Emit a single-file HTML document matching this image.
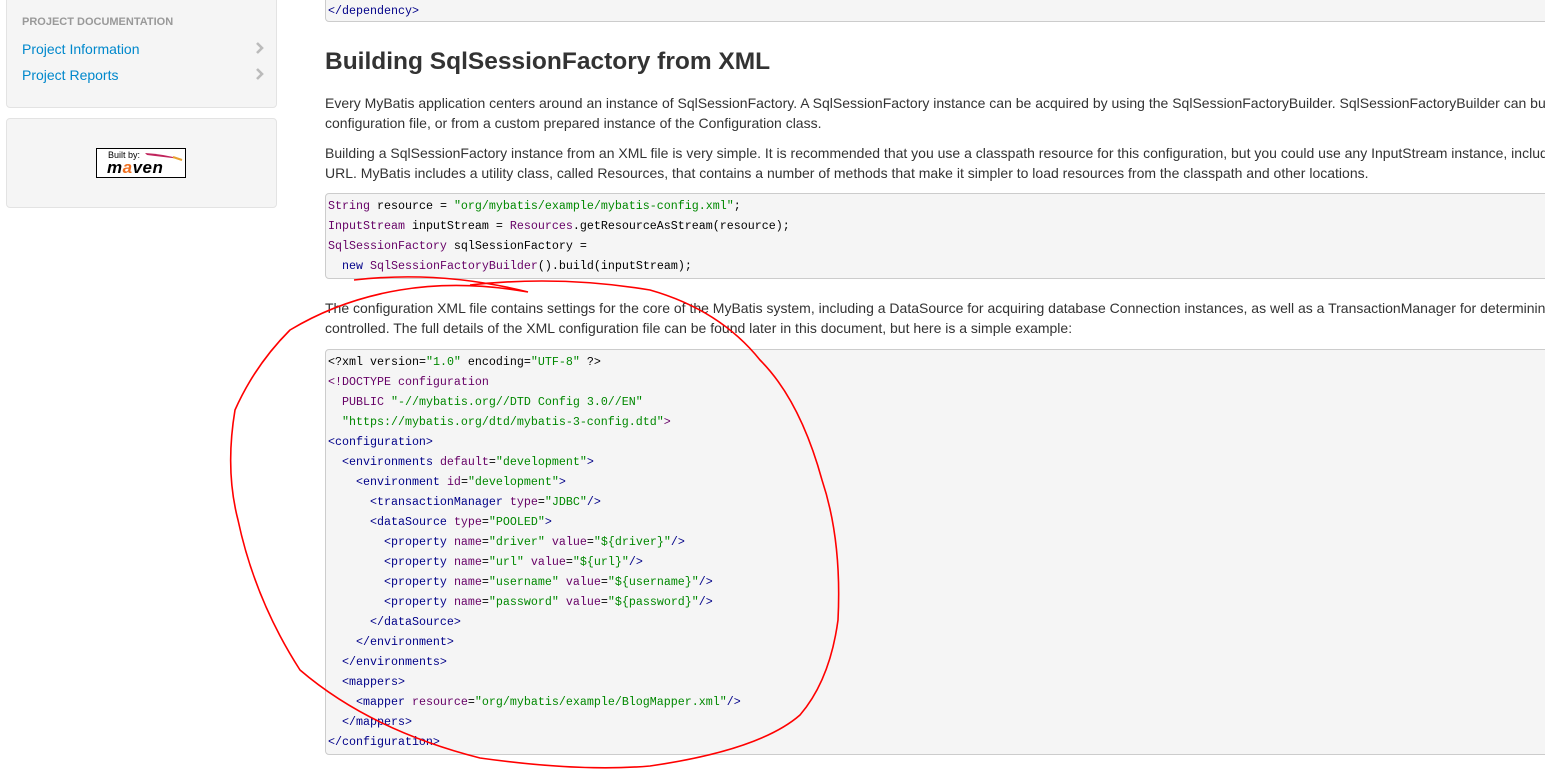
<!DOCTYPE html>
<html><head><meta charset="utf-8"><style>
html,body{margin:0;width:1545px;height:770px;overflow:hidden}
body{background:#fff;font-family:"Liberation Sans",sans-serif;color:#333;position:relative}
#wrap{position:absolute;left:0;top:0;width:1545px;height:770px;overflow:hidden}
.side{position:absolute;left:6px;width:269px;background:#f5f5f5;border:1px solid #e3e3e3;border-radius:4px}
.hdr{position:absolute;left:22px;top:16px;font-size:11px;font-weight:bold;color:#999}
.lnk{position:absolute;left:22px;font-size:14px;color:#0088cc}
.chev{position:absolute;left:255px;width:10px;height:12px}
pre{margin:0;position:absolute;left:325px;width:1240px;background:#f5f5f5;border:1px solid #ccc;border-radius:4px;font-family:"Liberation Mono",monospace;font-size:11.67px;line-height:20px;padding:0 0 0 2px;color:#000;box-sizing:border-box}
.t{color:#008}.a{color:#606}.s{color:#080}.p{color:#000}
p{position:absolute;left:325px;margin:0;font-size:14px;line-height:20px;white-space:nowrap}
h2{position:absolute;left:325px;top:48px;margin:0;font-size:24.5px;font-weight:bold;color:#333;white-space:nowrap}
</style></head><body><div id="wrap">
<div class="side" style="top:-5px;height:111px"></div>
<div class="hdr">PROJECT DOCUMENTATION</div>
<div class="lnk" style="top:41px">Project Information</div>
<svg class="chev" style="top:42px" viewBox="0 0 10 12"><path d="M2 1 L7 6 L2 11" fill="none" stroke="#bbb" stroke-width="2.6"/></svg>
<div class="lnk" style="top:67px">Project Reports</div>
<svg class="chev" style="top:68px" viewBox="0 0 10 12"><path d="M2 1 L7 6 L2 11" fill="none" stroke="#bbb" stroke-width="2.6"/></svg>
<div class="side" style="top:118px;height:88px"></div>
<div style="position:absolute;left:96px;top:148px;width:88px;height:28px;border:1px solid #000;background:#fff">
<div style="position:absolute;left:11px;top:1px;font-size:9px;color:#000">Built by:</div>
<svg style="position:absolute;left:46px;top:2px" width="40" height="10"><path d="M2 2 Q20 3 38 8 Q20 6 4 4Z" fill="#c0245c"/><path d="M30 6 L39 9" stroke="#e8a030" stroke-width="2"/></svg>
<div style="position:absolute;left:10px;top:9px;font-size:17px;font-weight:bold;font-style:italic;color:#000;letter-spacing:.5px">m<span style="color:#f07020">a</span>ven</div>
</div>

<pre style="top:-20px;height:42px;padding-top:0"><span class="t">
&lt;/dependency&gt;</span></pre>
<h2>Building SqlSessionFactory from XML</h2>
<p style="top:93px">Every MyBatis application centers around an instance of SqlSessionFactory. A SqlSessionFactory instance can be acquired by using the SqlSessionFactoryBuilder. SqlSessionFactoryBuilder can build a SqlSessionFactory from an XML</p>
<p style="top:113px">configuration file, or from a custom prepared instance of the Configuration class.</p>
<p style="top:143px">Building a SqlSessionFactory instance from an XML file is very simple. It is recommended that you use a classpath resource for this configuration, but you could use any InputStream instance, including one created from a literal file path or a file://</p>
<p style="top:163px">URL. MyBatis includes a utility class, called Resources, that contains a number of methods that make it simpler to load resources from the classpath and other locations.</p>
<pre style="top:193px;height:86px;padding-top:2px"><span class="a">String</span> resource <span class="p">=</span> <span class="s">"org/mybatis/example/mybatis-config.xml"</span><span class="p">;</span>
<span class="a">InputStream</span> inputStream <span class="p">=</span> <span class="a">Resources</span><span class="p">.</span>getResourceAsStream<span class="p">(</span>resource<span class="p">);</span>
<span class="a">SqlSessionFactory</span> sqlSessionFactory <span class="p">=</span>
  <span class="t">new</span> <span class="a">SqlSessionFactoryBuilder</span><span class="p">().</span>build<span class="p">(</span>inputStream<span class="p">);</span></pre>
<p style="top:298px">The configuration XML file contains settings for the core of the MyBatis system, including a DataSource for acquiring database Connection instances, as well as a TransactionManager for determining how transactions should be scoped and</p>
<p style="top:318px">controlled. The full details of the XML configuration file can be found later in this document, but here is a simple example:</p>
<pre style="top:349px;height:406px;padding-top:2px"><span class="p">&lt;?</span>xml version<span class="p">=</span><span class="s">"1.0"</span> encoding<span class="p">=</span><span class="s">"UTF-8"</span> <span class="p">?&gt;</span>
<span class="a">&lt;!DOCTYPE configuration</span>
<span class="a">  PUBLIC </span><span class="s">"-//mybatis.org//DTD Config 3.0//EN"</span>
<span class="s">  "https://mybatis.org/dtd/mybatis-3-config.dtd"</span><span class="a">&gt;</span>
<span class="t">&lt;configuration&gt;</span>
  <span class="t">&lt;environments</span> <span class="a">default</span><span class="p">=</span><span class="s">"development"</span><span class="t">&gt;</span>
    <span class="t">&lt;environment</span> <span class="a">id</span><span class="p">=</span><span class="s">"development"</span><span class="t">&gt;</span>
      <span class="t">&lt;transactionManager</span> <span class="a">type</span><span class="p">=</span><span class="s">"JDBC"</span><span class="t">/&gt;</span>
      <span class="t">&lt;dataSource</span> <span class="a">type</span><span class="p">=</span><span class="s">"POOLED"</span><span class="t">&gt;</span>
        <span class="t">&lt;property</span> <span class="a">name</span><span class="p">=</span><span class="s">"driver"</span> <span class="a">value</span><span class="p">=</span><span class="s">"${driver}"</span><span class="t">/&gt;</span>
        <span class="t">&lt;property</span> <span class="a">name</span><span class="p">=</span><span class="s">"url"</span> <span class="a">value</span><span class="p">=</span><span class="s">"${url}"</span><span class="t">/&gt;</span>
        <span class="t">&lt;property</span> <span class="a">name</span><span class="p">=</span><span class="s">"username"</span> <span class="a">value</span><span class="p">=</span><span class="s">"${username}"</span><span class="t">/&gt;</span>
        <span class="t">&lt;property</span> <span class="a">name</span><span class="p">=</span><span class="s">"password"</span> <span class="a">value</span><span class="p">=</span><span class="s">"${password}"</span><span class="t">/&gt;</span>
      <span class="t">&lt;/dataSource&gt;</span>
    <span class="t">&lt;/environment&gt;</span>
  <span class="t">&lt;/environments&gt;</span>
  <span class="t">&lt;mappers&gt;</span>
    <span class="t">&lt;mapper</span> <span class="a">resource</span><span class="p">=</span><span class="s">"org/mybatis/example/BlogMapper.xml"</span><span class="t">/&gt;</span>
  <span class="t">&lt;/mappers&gt;</span>
<span class="t">&lt;/configuration&gt;</span></pre>
<svg style="position:absolute;left:0;top:0" width="1545" height="770"><path d="M354 280 Q440 270 528 292 Q460 280 400 290 Q340 300 290 330 Q255 365 235 410 Q225 470 238 520 Q255 600 300 670 Q370 730 480 758 Q580 772 650 766 Q760 750 800 715 Q830 680 838 620 Q842 540 822 480 Q800 400 760 360 Q720 310 650 290 Q560 275 470 285" fill="none" stroke="#f00" stroke-width="1.6"/></svg>
</div></body></html>
